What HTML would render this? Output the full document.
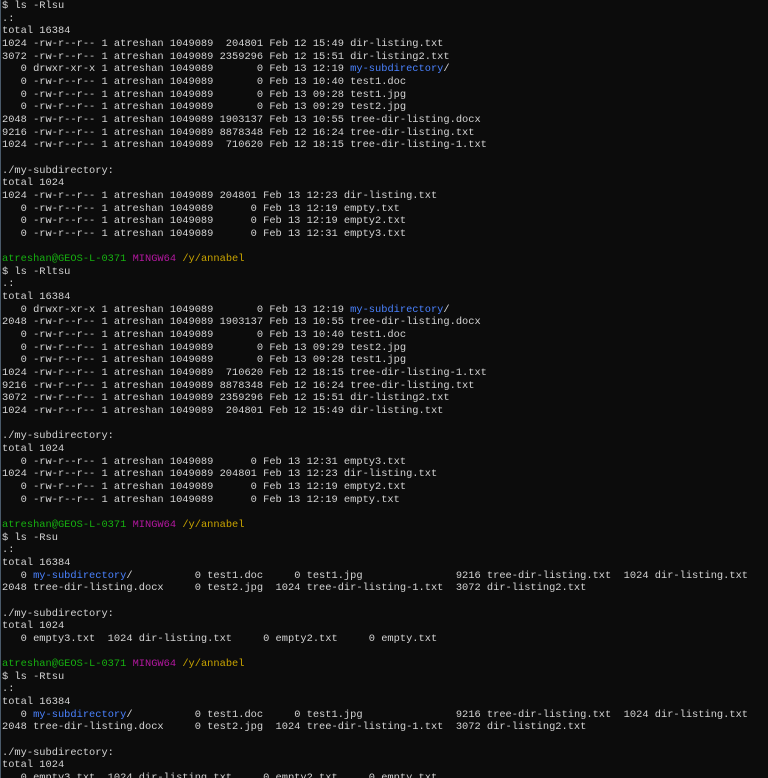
<!DOCTYPE html>
<html><head><meta charset="utf-8"><style>
html,body{margin:0;padding:0;background:#0c0c0c;width:768px;height:778px;overflow:hidden}
body{border-left:1px solid #4a5a6a;box-sizing:border-box}
pre{margin:0;padding:0 0 0 1px;font-family:"Liberation Mono",monospace;font-size:10.37px;line-height:12.65px;color:#d4d4d4}
.b{color:#4a82ff}.g{color:#16b010}.m{color:#b418a0}.y{color:#c9a400}
</style></head><body><pre>$ ls -Rlsu
.:
total 16384
1024 -rw-r--r-- 1 atreshan 1049089  204801 Feb 12 15:49 dir-listing.txt
3072 -rw-r--r-- 1 atreshan 1049089 2359296 Feb 12 15:51 dir-listing2.txt
   0 drwxr-xr-x 1 atreshan 1049089       0 Feb 13 12:19 <span class="b">my-subdirectory</span>/
   0 -rw-r--r-- 1 atreshan 1049089       0 Feb 13 10:40 test1.doc
   0 -rw-r--r-- 1 atreshan 1049089       0 Feb 13 09:28 test1.jpg
   0 -rw-r--r-- 1 atreshan 1049089       0 Feb 13 09:29 test2.jpg
2048 -rw-r--r-- 1 atreshan 1049089 1903137 Feb 13 10:55 tree-dir-listing.docx
9216 -rw-r--r-- 1 atreshan 1049089 8878348 Feb 12 16:24 tree-dir-listing.txt
1024 -rw-r--r-- 1 atreshan 1049089  710620 Feb 12 18:15 tree-dir-listing-1.txt

./my-subdirectory:
total 1024
1024 -rw-r--r-- 1 atreshan 1049089 204801 Feb 13 12:23 dir-listing.txt
   0 -rw-r--r-- 1 atreshan 1049089      0 Feb 13 12:19 empty.txt
   0 -rw-r--r-- 1 atreshan 1049089      0 Feb 13 12:19 empty2.txt
   0 -rw-r--r-- 1 atreshan 1049089      0 Feb 13 12:31 empty3.txt

<span class="g">atreshan@GEOS-L-0371</span> <span class="m">MINGW64</span> <span class="y">/y/annabel</span>
$ ls -Rltsu
.:
total 16384
   0 drwxr-xr-x 1 atreshan 1049089       0 Feb 13 12:19 <span class="b">my-subdirectory</span>/
2048 -rw-r--r-- 1 atreshan 1049089 1903137 Feb 13 10:55 tree-dir-listing.docx
   0 -rw-r--r-- 1 atreshan 1049089       0 Feb 13 10:40 test1.doc
   0 -rw-r--r-- 1 atreshan 1049089       0 Feb 13 09:29 test2.jpg
   0 -rw-r--r-- 1 atreshan 1049089       0 Feb 13 09:28 test1.jpg
1024 -rw-r--r-- 1 atreshan 1049089  710620 Feb 12 18:15 tree-dir-listing-1.txt
9216 -rw-r--r-- 1 atreshan 1049089 8878348 Feb 12 16:24 tree-dir-listing.txt
3072 -rw-r--r-- 1 atreshan 1049089 2359296 Feb 12 15:51 dir-listing2.txt
1024 -rw-r--r-- 1 atreshan 1049089  204801 Feb 12 15:49 dir-listing.txt

./my-subdirectory:
total 1024
   0 -rw-r--r-- 1 atreshan 1049089      0 Feb 13 12:31 empty3.txt
1024 -rw-r--r-- 1 atreshan 1049089 204801 Feb 13 12:23 dir-listing.txt
   0 -rw-r--r-- 1 atreshan 1049089      0 Feb 13 12:19 empty2.txt
   0 -rw-r--r-- 1 atreshan 1049089      0 Feb 13 12:19 empty.txt

<span class="g">atreshan@GEOS-L-0371</span> <span class="m">MINGW64</span> <span class="y">/y/annabel</span>
$ ls -Rsu
.:
total 16384
   0 <span class="b">my-subdirectory</span>/          0 test1.doc     0 test1.jpg               9216 tree-dir-listing.txt  1024 dir-listing.txt
2048 tree-dir-listing.docx     0 test2.jpg  1024 tree-dir-listing-1.txt  3072 dir-listing2.txt

./my-subdirectory:
total 1024
   0 empty3.txt  1024 dir-listing.txt     0 empty2.txt     0 empty.txt

<span class="g">atreshan@GEOS-L-0371</span> <span class="m">MINGW64</span> <span class="y">/y/annabel</span>
$ ls -Rtsu
.:
total 16384
   0 <span class="b">my-subdirectory</span>/          0 test1.doc     0 test1.jpg               9216 tree-dir-listing.txt  1024 dir-listing.txt
2048 tree-dir-listing.docx     0 test2.jpg  1024 tree-dir-listing-1.txt  3072 dir-listing2.txt

./my-subdirectory:
total 1024
   0 empty3.txt  1024 dir-listing.txt     0 empty2.txt     0 empty.txt
</pre></body></html>
